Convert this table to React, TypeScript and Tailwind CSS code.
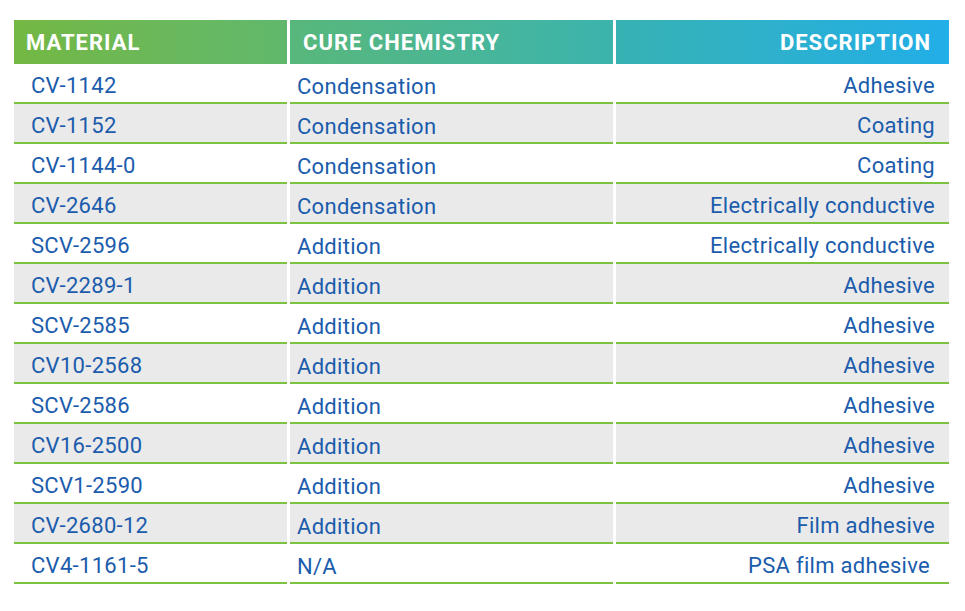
const rows = [
  ["CV-1142", "Condensation", "Adhesive"],
  ["CV-1152", "Condensation", "Coating"],
  ["CV-1144-0", "Condensation", "Coating"],
  ["CV-2646", "Condensation", "Electrically conductive"],
  ["SCV-2596", "Addition", "Electrically conductive"],
  ["CV-2289-1", "Addition", "Adhesive"],
  ["SCV-2585", "Addition", "Adhesive"],
  ["CV10-2568", "Addition", "Adhesive"],
  ["SCV-2586", "Addition", "Adhesive"],
  ["CV16-2500", "Addition", "Adhesive"],
  ["SCV1-2590", "Addition", "Adhesive"],
  ["CV-2680-12", "Addition", "Film adhesive"],
  ["CV4-1161-5", "N/A", "PSA film adhesive"],
];

export default function App() {
  return (
    <div
      className="w-[965px] h-[611px] bg-white pt-5 pl-[14px]"
      style={{ fontFamily: "Roboto, 'Liberation Sans', sans-serif" }}
    >
      <div className="grid grid-cols-[273px_323px_333px] gap-x-[3px] w-[935px]">
        {/* Header */}
        <div className="h-[44px] flex items-center pl-3 bg-gradient-to-r from-[#74b843] to-[#61b86c] text-white font-bold text-[22px] tracking-[1px]">
          MATERIAL
        </div>
        <div className="h-[44px] flex items-center pl-[13px] bg-gradient-to-r from-[#58b77a] to-[#3bb4ad] text-white font-bold text-[22px] tracking-[1px]">
          CURE CHEMISTRY
        </div>
        <div className="h-[44px] flex items-center justify-end pr-[18px] bg-gradient-to-r from-[#37b2b3] to-[#22aee8] text-white font-bold text-[22px] tracking-[1px]">
          DESCRIPTION
        </div>

        {/* Rows */}
        {rows.map((r, i) => {
          const bg = i % 2 === 1 ? "bg-[#eaeaea]" : "bg-white";
          return [
            <div
              key={`a${i}`}
              className={`${bg} h-10 border-b-2 border-[#7bc142] flex items-center pl-[17px] pt-1 text-[22px] tracking-[0.3px] text-[#1b5cac]`}
            >
              {r[0]}
            </div>,
            <div
              key={`b${i}`}
              className={`${bg} h-10 border-b-2 border-[#7bc142] flex items-center pl-[7px] pt-[7px] text-[22px] tracking-[0.3px] text-[#1b5cac]`}
            >
              {r[1]}
            </div>,
            <div
              key={`c${i}`}
              className={`${bg} h-10 border-b-2 border-[#7bc142] flex items-center justify-end pt-1 text-[22px] tracking-[0.3px] text-[#1b5cac] ${i === 12 ? "pr-[19px]" : "pr-[14px]"}`}
            >
              {r[2]}
            </div>,
          ];
        })}
      </div>
    </div>
  );
}
